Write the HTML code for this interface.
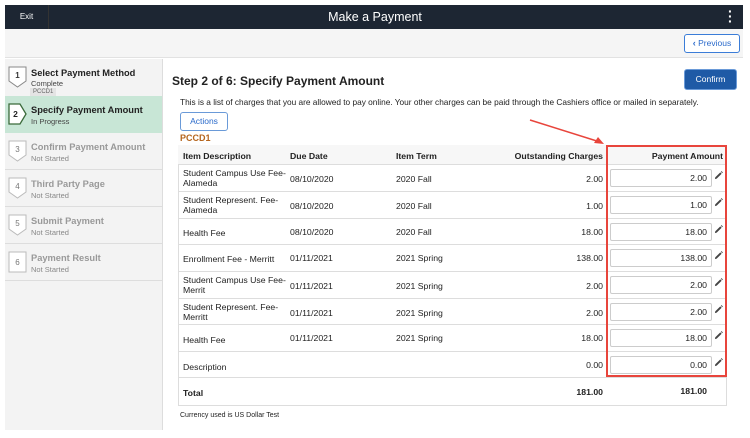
<!DOCTYPE html><html><head><style>
*{margin:0;padding:0;box-sizing:border-box}
body{width:750px;height:438px;background:#fff;font-family:"Liberation Sans",Arial,sans-serif;position:relative;overflow:hidden;color:#222}
.a{position:absolute}
.hdr{left:5px;top:5px;width:738px;height:24px;background:#1d2633}
.sub{left:5px;top:29px;width:738px;height:29px;background:#f5f5f5;border-bottom:1px solid #e2e2e2}
.left{left:5px;top:59px;width:158px;height:371px;background:#f3f3f3;border-right:1px solid #ddd}
.step{position:absolute;left:5px;width:157px;height:37px;border-bottom:1px solid #ddd}
.step .n{position:absolute;left:3px;top:7px;width:19px;height:22px}
.step .t{position:absolute;left:26px;top:9px;font-size:9.3px;font-weight:bold;color:#999}
.step .s{position:absolute;left:26px;top:21px;font-size:7.5px;color:#888}
.row{position:absolute;left:178px;width:549px;border-bottom:1px solid #ddd;font-size:8.7px}
.row span{position:absolute}
.inp{position:absolute;left:432px;width:102px;height:18px;border:1px solid #ccc;border-radius:2px;background:#fff;text-align:right;padding-right:4px;line-height:16px;font-size:8.7px}
.pen{position:absolute;left:536px;width:9px;height:9px}
</style></head><body>
<div class="a hdr"></div>
<div class="a" style="left:5px;top:5px;width:44px;height:24px;border-right:1px solid #333;color:#fff;font-size:8px;text-align:center;line-height:24px">Exit</div>
<div class="a" style="left:0;top:5px;width:750px;text-align:center;color:#fff;font-size:12.5px;line-height:24px">Make a Payment</div>
<div class="a" style="left:728px;top:9px;color:#fff;font-size:14px;font-weight:bold;line-height:5px">·<br>·<br>·</div>
<div class="a sub"></div>
<div class="a" style="left:684px;top:34px;width:56px;height:19px;border:1.5px solid #3b7dd8;border-radius:3px;background:#fff;color:#2a6acb;font-size:8.5px;line-height:16px;text-align:center"><b style="font-size:9px">‹</b> Previous</div>
<div class="a left"></div>
<div class="step" style="top:59px;height:37px;border:none"><svg class="n" viewBox="0 0 19 22"><path d="M1 1H18V15L9.5 21L1 15Z" fill="#fff" stroke="#888"/><text x="9.5" y="12" font-size="8" font-weight="bold" text-anchor="middle" fill="#333" font-family="Liberation Sans">1</text></svg><div class="t" style="color:#222;top:9px">Select Payment Method</div><div class="s" style="color:#444;top:20px">Complete</div><div class="a" style="left:25px;top:29px;font-size:6px;color:#666;background:#e4e4e4;padding:0 3px;line-height:8px">PCCD1</div></div>
<div class="step" style="top:96px;background:#c8e6d6;border:none"><svg class="n" viewBox="0 0 19 22"><path d="M1 1H12L18 11L12 21H1Z" fill="#fff" stroke="#3a6a3a" stroke-width="1.3"/><text x="7.5" y="14" font-size="8.5" font-weight="bold" text-anchor="middle" fill="#222" font-family="Liberation Sans">2</text></svg><div class="t" style="color:#222">Specify Payment Amount</div><div class="s" style="color:#444">In Progress</div></div>
<div class="step" style="top:133px"><svg class="n" viewBox="0 0 19 22"><path d="M1 1H18V15L9.5 21L1 15Z" fill="#fff" stroke="#bbb"/><text x="9.5" y="12" font-size="8" text-anchor="middle" fill="#777" font-family="Liberation Sans">3</text></svg><div class="t">Confirm Payment Amount</div><div class="s">Not Started</div></div>
<div class="step" style="top:170px"><svg class="n" viewBox="0 0 19 22"><path d="M1 1H18V15L9.5 21L1 15Z" fill="#fff" stroke="#bbb"/><text x="9.5" y="12" font-size="8" text-anchor="middle" fill="#777" font-family="Liberation Sans">4</text></svg><div class="t">Third Party Page</div><div class="s">Not Started</div></div>
<div class="step" style="top:207px"><svg class="n" viewBox="0 0 19 22"><path d="M1 1H18V15L9.5 21L1 15Z" fill="#fff" stroke="#bbb"/><text x="9.5" y="12" font-size="8" text-anchor="middle" fill="#777" font-family="Liberation Sans">5</text></svg><div class="t">Submit Payment</div><div class="s">Not Started</div></div>
<div class="step" style="top:244px"><svg class="n" viewBox="0 0 19 22"><path d="M1 1H18V21H1Z" fill="#fff" stroke="#bbb"/><text x="9.5" y="14" font-size="8" text-anchor="middle" fill="#777" font-family="Liberation Sans">6</text></svg><div class="t">Payment Result</div><div class="s">Not Started</div></div>

<div class="a" style="left:172px;top:74px;font-size:12px;font-weight:bold">Step 2 of 6: Specify Payment Amount</div>
<div class="a" style="left:684px;top:69px;width:53px;height:21px;background:#1f5aa6;border:1.5px solid #6a9ad8;border-radius:3px;color:#fff;font-size:8.5px;text-align:center;line-height:18px">Confirm</div>
<div class="a" style="left:180px;top:97px;font-size:8.3px;color:#222">This is a list of charges that you are allowed to pay online. Your other charges can be paid through the Cashiers office or mailed in separately.</div>
<div class="a" style="left:180px;top:112px;width:48px;height:19px;border:1px solid #6a9ad8;border-radius:3px;color:#2a6acb;font-size:8.5px;text-align:center;line-height:17px">Actions</div>
<div class="a" style="left:180px;top:133px;font-size:9px;font-weight:bold;color:#b5651d">PCCD1</div>

<div class="a" style="left:178px;top:145px;width:549px;height:261px;border:1px solid #ddd"></div>
<div class="row" style="top:145px;height:20px;background:#f7f7f7;font-weight:bold"><span style="left:5px;top:6px">Item Description</span><span style="left:112px;top:6px">Due Date</span><span style="left:218px;top:6px">Item Term</span><span style="right:124px;top:6px">Outstanding Charges</span><span style="right:4px;top:6px">Payment Amount</span></div>

<svg width="0" height="0" style="position:absolute"><defs><symbol id="p" viewBox="0 0 10 10"><path d="M1 9L1.5 7L7 1.5L8.5 3L3 8.5Z" fill="#444"/><path d="M7.6 0.9L8.4 0.1L9.9 1.6L9.1 2.4Z" fill="#444"/></symbol></defs></svg>

<div class="row" style="top:165px;height:27px"><span style="left:5px;top:3px;line-height:10px">Student Campus Use Fee-<br>Alameda</span><span style="left:112px;top:9px">08/10/2020</span><span style="left:218px;top:9px">2020 Fall</span><span style="right:124px;top:9px">2.00</span><div class="inp" style="top:4px">2.00</div><svg class="pen" style="top:6px"><use href="#p"/></svg></div>
<div class="row" style="top:192px;height:27px"><span style="left:5px;top:3px;line-height:10px">Student Represent. Fee-<br>Alameda</span><span style="left:112px;top:9px">08/10/2020</span><span style="left:218px;top:9px">2020 Fall</span><span style="right:124px;top:9px">1.00</span><div class="inp" style="top:4px">1.00</div><svg class="pen" style="top:6px"><use href="#p"/></svg></div>
<div class="row" style="top:219px;height:26px"><span style="left:5px;top:9px">Health Fee</span><span style="left:112px;top:8px">08/10/2020</span><span style="left:218px;top:8px">2020 Fall</span><span style="right:124px;top:8px">18.00</span><div class="inp" style="top:4px">18.00</div><svg class="pen" style="top:6px"><use href="#p"/></svg></div>
<div class="row" style="top:245px;height:27px"><span style="left:5px;top:9px">Enrollment Fee - Merritt</span><span style="left:112px;top:8px">01/11/2021</span><span style="left:218px;top:8px">2021 Spring</span><span style="right:124px;top:8px">138.00</span><div class="inp" style="top:4px">138.00</div><svg class="pen" style="top:6px"><use href="#p"/></svg></div>
<div class="row" style="top:272px;height:27px"><span style="left:5px;top:3px;line-height:10px">Student Campus Use Fee-<br>Merrit</span><span style="left:112px;top:9px">01/11/2021</span><span style="left:218px;top:9px">2021 Spring</span><span style="right:124px;top:9px">2.00</span><div class="inp" style="top:4px">2.00</div><svg class="pen" style="top:6px"><use href="#p"/></svg></div>
<div class="row" style="top:299px;height:26px"><span style="left:5px;top:3px;line-height:10px">Student Represent. Fee-<br>Merritt</span><span style="left:112px;top:9px">01/11/2021</span><span style="left:218px;top:9px">2021 Spring</span><span style="right:124px;top:9px">2.00</span><div class="inp" style="top:4px">2.00</div><svg class="pen" style="top:6px"><use href="#p"/></svg></div>
<div class="row" style="top:325px;height:27px"><span style="left:5px;top:10px">Health Fee</span><span style="left:112px;top:8px">01/11/2021</span><span style="left:218px;top:8px">2021 Spring</span><span style="right:124px;top:8px">18.00</span><div class="inp" style="top:4px">18.00</div><svg class="pen" style="top:6px"><use href="#p"/></svg></div>
<div class="row" style="top:352px;height:26px"><span style="left:5px;top:10px">Description</span><span style="right:124px;top:8px">0.00</span><div class="inp" style="top:4px">0.00</div><svg class="pen" style="top:6px"><use href="#p"/></svg></div>
<div class="row" style="top:378px;height:28px;font-weight:bold"><span style="left:5px;top:10px">Total</span><span style="right:124px;top:9px">181.00</span><span style="right:20px;top:8px">181.00</span></div>

<div class="a" style="left:606px;top:145px;width:121px;height:232px;border:2px solid #e8453c"></div>
<svg class="a" style="left:528px;top:118px" width="80" height="30"><line x1="2" y1="2" x2="72" y2="24" stroke="#e8453c" stroke-width="1.5"/><path d="M76 26L66 25L70 19Z" fill="#e8453c"/></svg>
<div class="a" style="left:180px;top:412px;font-size:7px">Currency used is US Dollar Test</div>
</body></html>
